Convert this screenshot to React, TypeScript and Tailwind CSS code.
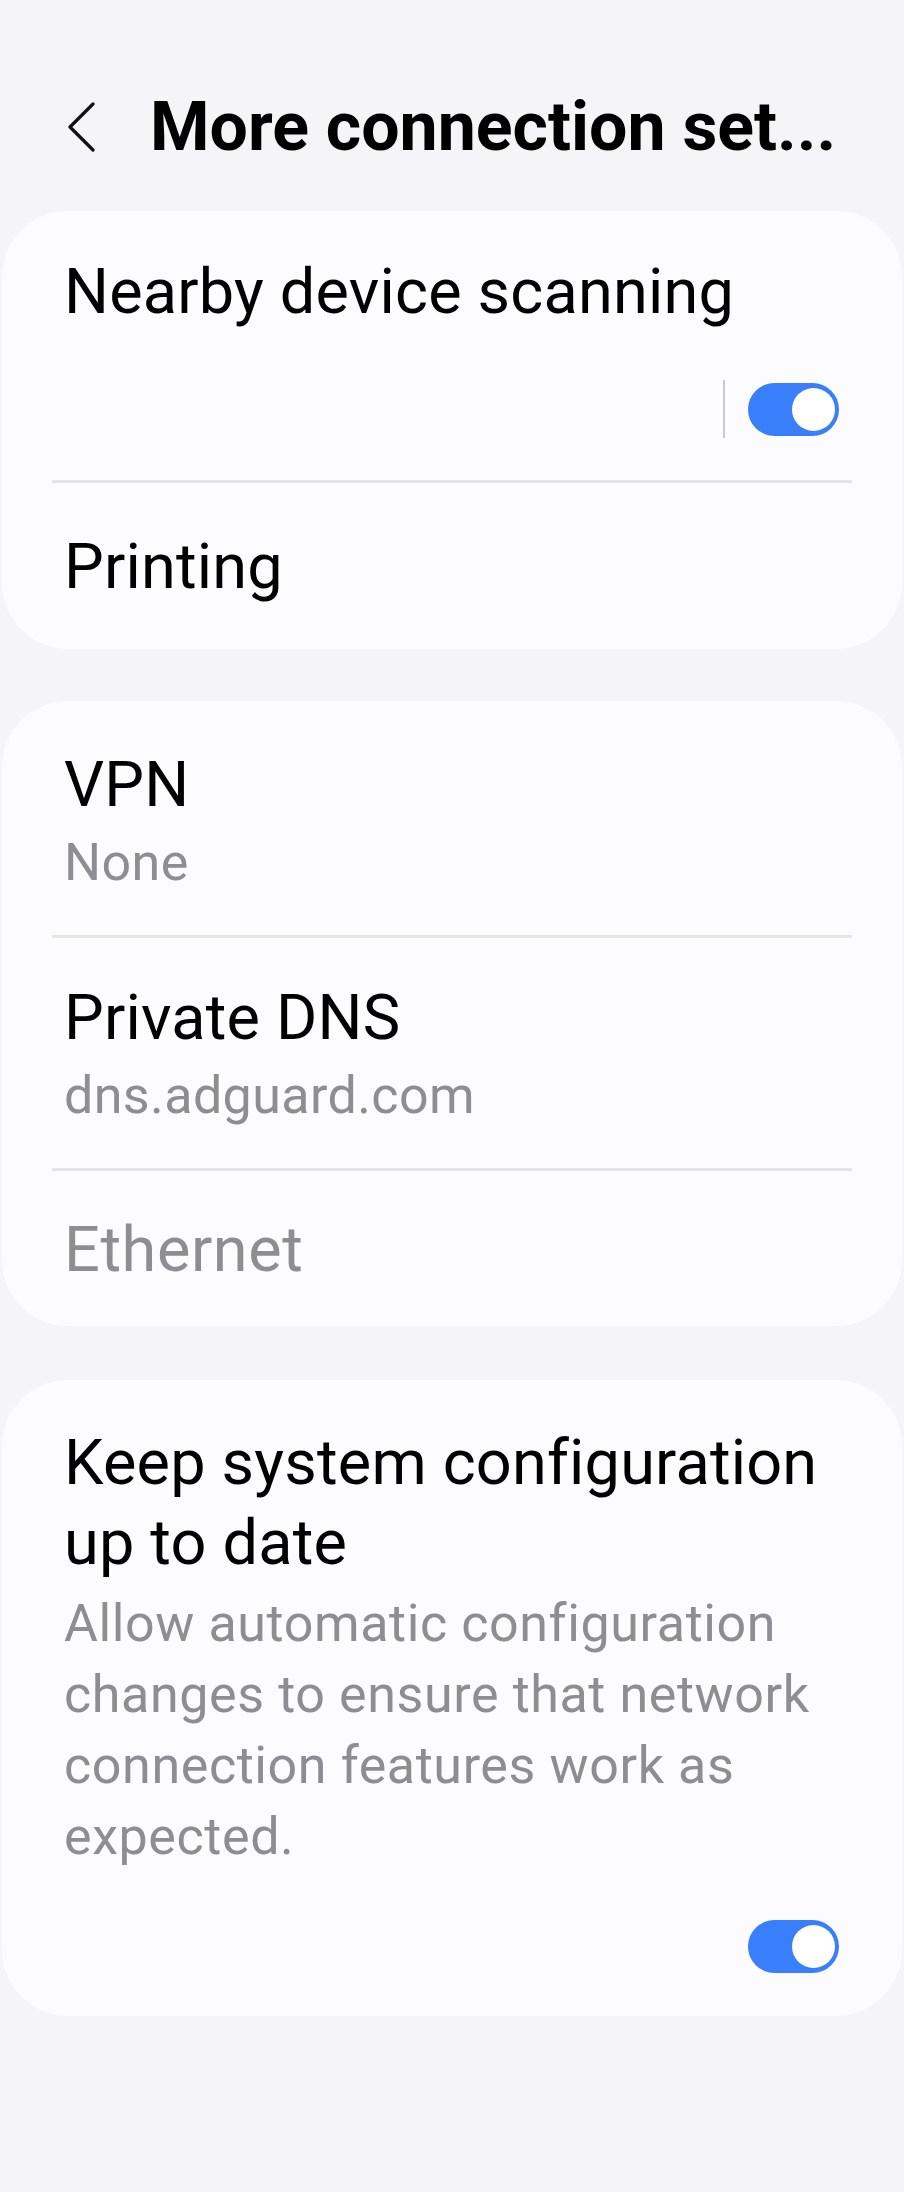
export default function App() {
  return (
    <div className="min-h-[2192px] bg-[#f5f5f7] pt-[84px] font-['Roboto',sans-serif] text-black">
      {/* Header */}
      <header className="flex h-[86px] items-center">
        <div className="ml-[66px] flex h-[50px] w-[32px] items-center">
          <svg width="30" height="50" viewBox="0 0 30 50" fill="none">
            <path
              d="M27 2 L4 25 L27 48"
              stroke="#111"
              strokeWidth="3.2"
              strokeLinecap="round"
              strokeLinejoin="round"
            />
          </svg>
        </div>
        <h1 className="ml-[52px] whitespace-nowrap text-[68px] font-bold leading-none">
          More connection set...
        </h1>
      </header>

      {/* Card 1 */}
      <section className="mx-[2px] mt-[41px] rounded-[66px] bg-[#fcfcfe]">
        <div className="px-[62px] pt-[44px] pb-[42px]">
          <p className="text-[63px] leading-[74px] tracking-[0.2px]">Nearby device scanning</p>
          <div className="mt-[51px] flex items-center justify-end gap-[23px] pr-[1px]">
            <div className="h-[58px] w-[2px] bg-[#cacacc]" />
            <Toggle />
          </div>
        </div>
        <Divider />
        <div className="px-[62px] pt-[47px] pb-[45px]">
          <p className="text-[63px] leading-[74px] tracking-[0.2px]">Printing</p>
        </div>
      </section>

      {/* Card 2 */}
      <section className="mx-[2px] mt-[52px] rounded-[66px] bg-[#fcfcfe]">
        <div className="px-[62px] pt-[47px] pb-[42px]">
          <p className="text-[63px] leading-[74px] tracking-[0.2px]">VPN</p>
          <p className="mt-[11px] text-[52px] leading-[60px] tracking-[0.4px] text-[#8e8e92]">None</p>
        </div>
        <Divider />
        <div className="px-[62px] pt-[43px] pb-[42px]">
          <p className="text-[63px] leading-[74px] tracking-[0.2px]">Private DNS</p>
          <p className="mt-[11px] text-[52px] leading-[60px] tracking-[0.4px] text-[#8e8e92]">
            dns.adguard.com
          </p>
        </div>
        <Divider />
        <div className="px-[62px] pt-[42px] pb-[39px]">
          <p className="text-[63px] leading-[74px] tracking-[0.6px] text-[#8e8e92]">Ethernet</p>
        </div>
      </section>

      {/* Card 3 */}
      <section className="mx-[2px] mt-[54px] rounded-[66px] bg-[#fcfcfe]">
        <div className="px-[62px] pt-[43px] pb-[43px]">
          <p className="text-[63px] leading-[80px] tracking-[0.2px]">
            Keep system configuration up to date
          </p>
          <p className="mt-[5px] text-[52px] leading-[71px] tracking-[0.6px] text-[#8e8e92]">
            Allow automatic configuration changes to ensure that network connection features work as
            expected.
          </p>
          <div className="mt-[48px] flex justify-end pr-[1px]">
            <Toggle />
          </div>
        </div>
      </section>
    </div>
  );
}

function Toggle() {
  return (
    <div className="flex h-[53px] w-[91px] items-center justify-end rounded-full bg-[#397efa] pr-[4px]">
      <div className="h-[43px] w-[43px] rounded-full bg-white" />
    </div>
  );
}

function Divider() {
  return <div className="mx-[50px] h-[3px] bg-[#e5e5e7]" />;
}
